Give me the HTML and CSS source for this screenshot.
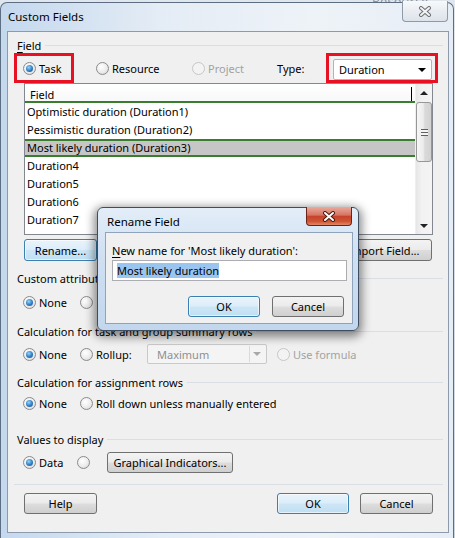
FILE: index.html
```html
<!DOCTYPE html>
<html lang="en">
<head>
    <meta charset="UTF-8">
    <title>Custom Fields</title>
    <link rel="stylesheet" href="styles.css">
</head>
<body>
    <div class="behind">Resource</div>

    <div class="window">
        <div class="titlebar">
            <span class="title">Custom Fields</span>
            <span class="caption-close">
                <svg width="14" height="11" viewBox="0 0 14 11">
                    <path d="M3 2 L11 9 M11 2 L3 9" stroke="#6b6f75" stroke-width="4" stroke-linecap="round"/>
                    <path d="M3 2 L11 9 M11 2 L3 9" stroke="#f4f4f4" stroke-width="2" stroke-linecap="round"/>
                </svg>
            </span>
        </div>

        <div class="client">
            <div class="section-title first"><span><u>F</u>ield</span></div>

            <div class="scope-row">
                <label class="mark mark-task"><span class="radio on"></span>Task</label>
                <label class="opt w-resource"><span class="radio"></span>Resource</label>
                <label class="opt w-project disabled"><span class="radio"></span>Project</label>
                <span class="type-label">Type:</span>
                <span class="mark mark-type">
                    <span class="combo">Duration<span class="combo-arrow"></span></span>
                </span>
            </div>

            <div class="fieldlist">
                <div class="list-body">
                    <div class="list-head"><span class="head-cell">Field</span></div>
                    <div class="list-row">Optimistic duration (Duration1)</div>
                    <div class="list-row">Pessimistic duration (Duration2)</div>
                    <div class="list-row selected">Most likely duration (Duration3)</div>
                    <div class="list-row">Duration4</div>
                    <div class="list-row">Duration5</div>
                    <div class="list-row">Duration6</div>
                    <div class="list-row">Duration7</div>
                    <div class="list-row">Duration8</div>
                </div>
                <div class="vscroll">
                    <span class="sb-btn up"></span>
                    <span class="sb-thumb"><span class="grip"></span></span>
                    <span class="sb-track"></span>
                    <span class="sb-btn down"></span>
                </div>
            </div>

            <div class="btn-row">
                <button class="btn default w-73">Rename...</button>
                <button class="btn w-73">Delete</button>
                <button class="btn w-134">Add Field to Enterprise...</button>
                <button class="btn w-97">Import Field...</button>
            </div>

            <div class="section-title s-attr"><span>Custom attributes</span></div>
            <div class="opt-row r-attr">
                <label class="opt w-none"><span class="radio on"></span>None</label>
                <span class="radio"></span>
                <button class="btn w-73 inline-btn">Lookup...</button>
                <span class="radio gap-left"></span>
                <button class="btn w-73 inline-btn">Formula...</button>
            </div>

            <div class="section-title s-summary"><span>Calculation for task and group summary rows</span></div>
            <div class="opt-row r-summary">
                <label class="opt w-none"><span class="radio on"></span>None</label>
                <label class="opt w-rollup"><span class="radio"></span>Rollup:</label>
                <span class="combo disabled w-max">Maximum<span class="combo-arrow"></span></span>
                <label class="opt disabled"><span class="radio"></span>Use formula</label>
            </div>

            <div class="section-title s-assign"><span>Calculation for assignment rows</span></div>
            <div class="opt-row r-assign">
                <label class="opt w-none"><span class="radio on"></span>None</label>
                <label class="opt"><span class="radio"></span>Roll down unless manually entered</label>
            </div>

            <div class="section-title s-values"><span>Values to display</span></div>
            <div class="opt-row r-values">
                <label class="opt w-data"><span class="radio on"></span>Data</label>
                <span class="opt w-graph"><span class="radio"></span></span>
                <button class="btn w-126">Graphical Indicators...</button>
            </div>

            <div class="separator"></div>

            <div class="footer">
                <button class="btn w-73">Help</button>
                <span class="spacer"></span>
                <button class="btn default w-72">OK</button>
                <button class="btn w-73">Cancel</button>
            </div>
        </div>
    </div>

    <div class="rename-dialog">
        <div class="dlg-titlebar">
            <span class="dlg-title">Rename Field</span>
            <span class="dlg-close">
                <svg width="14" height="11" viewBox="0 0 14 11">
                    <path d="M3 2 L11 9 M11 2 L3 9" stroke="#4a1a12" stroke-width="4" stroke-linecap="round"/>
                    <path d="M3 2 L11 9 M11 2 L3 9" stroke="#ffffff" stroke-width="2" stroke-linecap="round"/>
                </svg>
            </span>
        </div>
        <div class="dlg-client">
            <div class="dlg-label"><u>N</u>ew name for 'Most likely duration':</div>
            <div class="textbox"><span class="sel">Most likely duration</span></div>
            <div class="dlg-buttons">
                <button class="btn default w-72">OK</button>
                <button class="btn w-72">Cancel</button>
            </div>
        </div>
    </div>
</body>
</html>
```

FILE: styles.css
```css
body {
    margin: 0;
    width: 455px;
    height: 538px;
    overflow: hidden;
    position: relative;
    background: linear-gradient(to bottom, #dfe6ee, #c8d5e3);
    font-family: "Noto Sans", "Open Sans", sans-serif;
    font-size: 11px;
    color: #000;
}
u {
    text-decoration: underline;
    text-underline-offset: 2px;
}
.behind {
    position: absolute;
    left: 372px;
    top: -8px;
    font-size: 13px;
    color: #8b96a3;
    filter: blur(0.6px);
}

/* main window frame */
.window {
    position: relative;
    box-sizing: border-box;
    width: 454px;
    height: 538px;
    margin-top: 2px;
    padding-left: 6px;
    border: 1px solid #5d6d82;
    border-bottom: none;
    border-radius: 7px 7px 0 0;
    background: linear-gradient(to right, #c4d8ee, #e4ecf5 35%, #eef3f8 70%, #e6edf5);
}
.titlebar {
    display: flex;
    align-items: flex-start;
    height: 28px;
}
.title {
    padding: 7px 0 0 1px;
    line-height: 14px;
    font-size: 11.5px;
}
.caption-close {
    display: flex;
    align-items: center;
    justify-content: center;
    box-sizing: border-box;
    width: 46px;
    height: 21px;
    margin: -2px 5px 0 auto;
    border: 1px solid #8f99a7;
    border-top: none;
    border-radius: 0 0 4px 4px;
    background: linear-gradient(to bottom, #f7f9fb, #e9edf2 50%, #dde3ea);
}
.client {
    box-sizing: border-box;
    width: 442px;
    height: 502px;
    padding-top: 6px;
    border: 1px solid #8d9aab;
    background: #f0f0f0;
}

/* group headings with the etched rule */
.section-title {
    display: flex;
    align-items: center;
    gap: 4px;
    height: 16px;
    padding-left: 9px;
    margin-right: 5px;
    white-space: nowrap;
}
.section-title::after {
    content: "";
    flex: 1;
    height: 1px;
    background: #d9dfe5;
}
.section-title.first { height: 15px; }
.s-attr { margin-top: 9px; }
.s-summary { margin-top: 9px; }
.s-assign { margin-top: 9px; }
.s-values { margin-top: 17px; }

/* radio buttons */
.radio {
    position: relative;
    flex: none;
    box-sizing: border-box;
    width: 13px;
    height: 13px;
    margin-right: 3px;
    border: 1px solid #8b8b8b;
    border-radius: 50%;
    background: radial-gradient(circle at 40% 35%, #ffffff, #ececec 55%, #d0d0d0);
}
.radio.on::after {
    content: "";
    position: absolute;
    left: 2px;
    top: 2px;
    width: 7px;
    height: 7px;
    border-radius: 50%;
    background: radial-gradient(circle at 40% 35%, #93d6fc, #2f7cc4 55%, #1a4c86);
}
.opt {
    display: flex;
    align-items: center;
    flex: none;
    white-space: nowrap;
}
.disabled { color: #a2a2a2; }
.disabled .radio {
    border-color: #c6c6c6;
    background: #f3f3f3;
}

/* Task / Resource / Project / Type row */
.scope-row {
    display: flex;
    align-items: center;
    height: 30px;
}
.mark {
    display: flex;
    box-sizing: border-box;
    height: 30px;
    border: 3px solid #e81123;
}
.mark-task {
    align-items: center;
    width: 60px;
    margin-left: 6px;
    padding-left: 6px;
}
.w-resource { width: 96px; margin-left: 22px; }
.w-project { width: 85px; }
.type-label { width: 49px; }
.mark-type {
    align-items: flex-end;
    width: 112px;
    padding-left: 4px;
}
.combo {
    position: relative;
    display: flex;
    align-items: center;
    box-sizing: border-box;
    width: 99px;
    height: 21px;
    padding-left: 5px;
    border: 1px solid #b4b4b4;
    border-radius: 2px;
    background: #fff;
}
.combo-arrow {
    position: absolute;
    right: 5px;
    top: 8px;
    width: 0;
    height: 0;
    border-left: 4px solid transparent;
    border-right: 4px solid transparent;
    border-top: 4px solid #000;
}
.combo.disabled {
    height: 20px;
    background: #f4f4f4;
    border-color: #c9c9c9;
    color: #8f8f8f;
    padding-left: 9px;
}
.combo.disabled::before {
    content: "";
    position: absolute;
    right: 16px;
    top: 1px;
    bottom: 1px;
    width: 1px;
    background: #dadada;
}
.combo.disabled .combo-arrow {
    right: 5px;
    top: 7px;
    border-top-color: #a8a8a8;
}
.w-max { width: 120px; margin-right: 10px; }

/* field list */
.fieldlist {
    display: flex;
    box-sizing: border-box;
    width: 409px;
    height: 152px;
    margin-left: 16px;
    border: 1px solid #828790;
    background: #fff;
    overflow: hidden;
}
.list-body {
    flex: 1;
    overflow: hidden;
}
.list-head {
    height: 14px;
    padding-top: 3px;
    border-bottom: 2px solid #3b7d2f;
    background: linear-gradient(to bottom, #ffffff, #f7f8f9);
}
.head-cell {
    display: block;
    box-sizing: border-box;
    width: 387px;
    height: 14px;
    padding: 1px 0 0 5px;
    line-height: 14px;
    border-right: 1px solid #000;
}
.list-row {
    box-sizing: border-box;
    height: 18px;
    padding-left: 2px;
    line-height: 17px;
    white-space: nowrap;
}
.list-row.selected {
    background: #c6c6c6;
    border-top: 2px solid #3b7d2f;
    border-bottom: 2px solid #3b7d2f;
    line-height: 14px;
}
.vscroll {
    display: flex;
    flex-direction: column;
    width: 16px;
    background: linear-gradient(to right, #e6e6e6, #f2f2f2 35%, #f4f4f4);
    border-left: 1px solid #efefef;
}
.sb-btn {
    display: flex;
    align-items: center;
    justify-content: center;
    height: 17px;
}
.sb-btn::before {
    content: "";
    width: 0;
    height: 0;
    border-left: 4px solid transparent;
    border-right: 4px solid transparent;
}
.sb-btn.up::before { border-bottom: 4px solid #222; }
.sb-btn.down::before { border-top: 4px solid #222; }
.sb-thumb {
    display: flex;
    align-items: center;
    justify-content: center;
    box-sizing: border-box;
    height: 60px;
    margin: 1px 0 0 0;
    border: 1px solid #979797;
    border-radius: 3px;
    background: linear-gradient(to right, #f6f6f6, #ececec 45%, #dadada 55%, #d2d2d2);
}
.grip {
    width: 7px;
    height: 7px;
    background: repeating-linear-gradient(to bottom, #5f5f5f 0 1px, #f4f4f4 1px 3px);
}
.sb-track { flex: 1; }

/* push buttons */
.btn {
    box-sizing: border-box;
    height: 21px;
    padding: 0;
    border: 1px solid #707070;
    border-radius: 3px;
    background: linear-gradient(to bottom, #f3f3f3, #ebebeb 48%, #dddddd 52%, #cfcfcf);
    font: inherit;
    color: #000;
    white-space: nowrap;
    flex: none;
}
.btn.default {
    border-color: #3c7fb1;
    background: linear-gradient(to bottom, #e9f4fc, #dcedf9 48%, #cde6f6 52%, #bfdff3);
    box-shadow: inset 0 0 0 1px rgba(255, 255, 255, 0.6);
}
.w-72 { width: 72px; }
.w-73 { width: 73px; }
.w-97 { width: 97px; }
.w-126 { width: 126px; height: 21px; }
.w-134 { width: 134px; }

.btn-row {
    display: flex;
    justify-content: space-between;
    margin: 4px 16px 0 16px;
}
.btn-row .btn { height: 22px; }

.opt-row {
    display: flex;
    align-items: center;
    height: 22px;
    padding-left: 15px;
}
.r-attr { height: 24px; margin-top: 4px; }
.r-summary { margin-top: 4px; }
.r-assign { margin-top: 2px; }
.r-values { margin-top: 4px; }
.w-none { width: 57px; }
.w-rollup { width: 67px; }
.w-data { width: 54px; }
.w-graph { width: 30px; }
.inline-btn { margin-left: 2px; }
.gap-left { margin-left: 14px; }

.separator {
    height: 1px;
    margin: 11px 5px 0 6px;
    background: #d9dfe5;
}
.footer {
    display: flex;
    gap: 11px;
    margin: 8px 15px 0 16px;
}
.spacer { flex: 1; }

/* rename dialog on top of the main window */
.rename-dialog {
    position: absolute;
    left: 97px;
    top: 207px;
    box-sizing: border-box;
    width: 262px;
    height: 124px;
    border: 1px solid #3f4d60;
    border-radius: 6px;
    background: linear-gradient(to bottom, #e3edf8, #cfe0f2 40%, #c2d7ed);
    box-shadow: 0 3px 10px 3px rgba(0, 0, 0, 0.45);
}
.dlg-titlebar {
    display: flex;
    align-items: flex-start;
    height: 24px;
}
.dlg-title {
    padding: 7px 0 0 9px;
    line-height: 14px;
    font-size: 11.5px;
}
.dlg-close {
    display: flex;
    align-items: center;
    justify-content: center;
    box-sizing: border-box;
    width: 46px;
    height: 19px;
    margin: -1px 6px 0 auto;
    border: 1px solid #6a2314;
    border-top: none;
    border-radius: 0 0 4px 4px;
    background: linear-gradient(to bottom, #eaaa9b, #d77462 45%, #c5432c 52%, #cf5531 80%, #e0886a);
}
.dlg-client {
    box-sizing: border-box;
    width: 248px;
    height: 92px;
    margin-left: 7px;
    border: 1px solid #8fa3bc;
    background: #f0f0f0;
}
.dlg-label {
    height: 16px;
    margin-top: 10px;
    padding-left: 6px;
    line-height: 16px;
    white-space: nowrap;
}
.textbox {
    display: flex;
    align-items: center;
    box-sizing: border-box;
    width: 235px;
    height: 21px;
    margin: 1px 0 0 6px;
    padding-left: 4px;
    border: 1px solid #abadb3;
    background: #fff;
}
.sel {
    line-height: 15px;
    background: #99c5ef;
}
.dlg-buttons {
    display: flex;
    justify-content: flex-end;
    gap: 12px;
    margin-top: 15px;
    padding-right: 8px;
}
```
